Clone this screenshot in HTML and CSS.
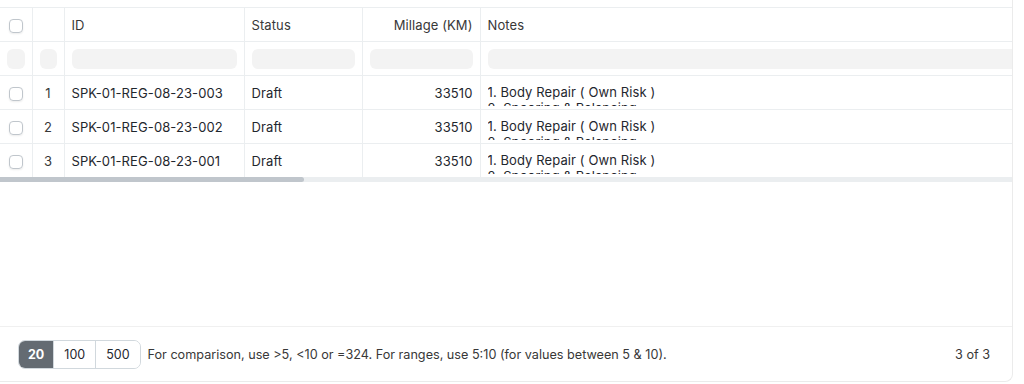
FILE: index.html
```html
<!DOCTYPE html>
<html lang="en">
<head>
    <meta charset="UTF-8">
    <title>Service Orders</title>
    <link rel="stylesheet" href="styles.css">
</head>
<body>
    <div class="card">
        <div class="grid-wrap">
            <table class="grid">
                <colgroup>
                    <col class="c-check">
                    <col class="c-no">
                    <col class="c-id">
                    <col class="c-status">
                    <col class="c-km">
                    <col class="c-notes">
                </colgroup>
                <tr class="head">
                    <td class="center"><span class="check"></span></td>
                    <td></td>
                    <td>ID</td>
                    <td>Status</td>
                    <td class="right">Millage (KM)</td>
                    <td>Notes</td>
                </tr>
                <tr class="filters">
                    <td><div class="filter"></div></td>
                    <td><div class="filter"></div></td>
                    <td><div class="filter"></div></td>
                    <td><div class="filter"></div></td>
                    <td><div class="filter"></div></td>
                    <td><div class="filter last"></div></td>
                </tr>
                <tr>
                    <td class="center"><span class="check"></span></td>
                    <td class="center num">1</td>
                    <td>SPK-01-REG-08-23-003</td>
                    <td>Draft</td>
                    <td class="right">33510</td>
                    <td class="top"><div class="notes">1. Body Repair ( Own Risk )<br>2. Spooring &amp; Balancing</div></td>
                </tr>
                <tr>
                    <td class="center"><span class="check"></span></td>
                    <td class="center num">2</td>
                    <td>SPK-01-REG-08-23-002</td>
                    <td>Draft</td>
                    <td class="right">33510</td>
                    <td class="top"><div class="notes">1. Body Repair ( Own Risk )<br>2. Spooring &amp; Balancing</div></td>
                </tr>
                <tr>
                    <td class="center"><span class="check"></span></td>
                    <td class="center num">3</td>
                    <td>SPK-01-REG-08-23-001</td>
                    <td>Draft</td>
                    <td class="right">33510</td>
                    <td class="top"><div class="notes">1. Body Repair ( Own Risk )<br>2. Spooring &amp; Balancing</div></td>
                </tr>
            </table>
        </div>
        <div class="scrollbar"><div class="thumb"></div></div>

        <div class="spacer"></div>

        <div class="footer">
            <div class="pages">
                <button class="active">20</button>
                <button>100</button>
                <button>500</button>
            </div>
            <span class="help">For comparison, use &gt;5, &lt;10 or =324. For ranges, use 5:10 (for values between 5 &amp; 10).</span>
            <span class="count">3 of 3</span>
        </div>
    </div>
</body>
</html>
```

FILE: styles.css
```css
body{
    margin: 0;
    background-color: #fff;
    font-family: Inter, "Noto Sans", sans-serif;
    font-size: 13px;
    color: #1f272e;
}
.card{
    width: 1012px;
    height: 381px;
    border-right: 1px solid #ebebeb;
    border-bottom: 1px solid #ebebeb;
    border-bottom-right-radius: 8px;
    display: flex;
    flex-direction: column;
    overflow: hidden;
}
.grid-wrap{
    margin-top: 7px;
    border-top: 1px solid #ebeef0;
    overflow: hidden;
}
.grid{
    width: 3370px;
    table-layout: fixed;
    border-collapse: collapse;
    letter-spacing: 0.1px;
}
.c-check{ width: 32px; }
.c-no{ width: 32px; }
.c-id{ width: 180px; }
.c-status{ width: 118px; }
.c-km{ width: 118px; }
.grid td{
    height: 33px;
    padding: 0 7px;
    border-bottom: 1px solid #ebeef0;
    border-right: 1px solid #ebeef0;
    white-space: nowrap;
    overflow: hidden;
    vertical-align: middle;
}
.grid td.top{
    vertical-align: top;
}
.grid tr:last-child td{
    border-bottom: none;
}
.head td{
    color: #383838;
}
.center{
    text-align: center;
}
.right{
    text-align: right;
}
.num{
    color: #383838;
}
.check{
    display: inline-block;
    width: 12px;
    height: 12px;
    border: 1px solid #c0c6cc;
    border-radius: 4px;
    vertical-align: middle;
    box-shadow: 0 1px 2px rgba(0,0,0,0.08);
}
.filter{
    height: 20px;
    background-color: #f3f3f3;
    border-radius: 6px;
}
.filter.last{
    border-radius: 6px 0 0 6px;
}
.notes{
    height: 22px;
    padding-top: 8px;
    line-height: 16px;
    overflow: hidden;
}
.scrollbar{
    height: 5px;
    background-color: #ebeef0;
}
.thumb{
    width: 304px;
    height: 5px;
    background-color: #c0c6cc;
    border-radius: 0 3px 3px 0;
}
.spacer{
    flex: 1;
}
.footer{
    border-top: 1px solid #f0f0f0;
    height: 54px;
    display: flex;
    align-items: center;
    padding: 0 22px 0 18px;
}
.pages{
    display: flex;
    border: 1px solid #d1d8dd;
    border-radius: 7px;
    overflow: hidden;
    margin-right: 7px;
}
.pages button{
    font-family: Inter, "Noto Sans", sans-serif;
    font-size: 12.5px;
    color: #1f272e;
    background-color: #fff;
    border: none;
    border-left: 1px solid #d1d8dd;
    height: 27px;
    padding: 0 10px;
}
.pages button.active{
    background-color: #646b72;
    color: #fff;
    font-weight: 700;
    border-left: none;
    padding: 0 9px;
}
.help{
    color: #383838;
    font-size: 12.65px;
    flex: 1;
}
.count{
    color: #383838;
    font-size: 12.65px;
}
```
